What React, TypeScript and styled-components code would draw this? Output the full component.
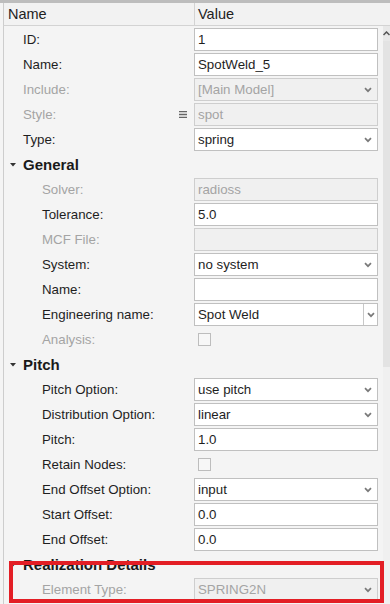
import styled, { createGlobalStyle } from 'styled-components';

type Control =
  | { type: 'input'; value: string; disabled?: boolean }
  | { type: 'select'; value: string; disabled?: boolean }
  | { type: 'combo'; value: string }
  | { type: 'check'; disabled?: boolean };

type Item =
  | { kind: 'section'; title: string }
  | { kind: 'field'; label: string; depth: 0 | 1; disabled?: boolean; menu?: boolean; control: Control };

const items: Item[] = [
  { kind: 'field', label: 'ID:', depth: 0, control: { type: 'input', value: '1' } },
  { kind: 'field', label: 'Name:', depth: 0, control: { type: 'input', value: 'SpotWeld_5' } },
  { kind: 'field', label: 'Include:', depth: 0, disabled: true, control: { type: 'select', value: '[Main Model]', disabled: true } },
  { kind: 'field', label: 'Style:', depth: 0, disabled: true, menu: true, control: { type: 'input', value: 'spot', disabled: true } },
  { kind: 'field', label: 'Type:', depth: 0, control: { type: 'select', value: 'spring' } },
  { kind: 'section', title: 'General' },
  { kind: 'field', label: 'Solver:', depth: 1, disabled: true, control: { type: 'input', value: 'radioss', disabled: true } },
  { kind: 'field', label: 'Tolerance:', depth: 1, control: { type: 'input', value: '5.0' } },
  { kind: 'field', label: 'MCF File:', depth: 1, disabled: true, control: { type: 'input', value: '', disabled: true } },
  { kind: 'field', label: 'System:', depth: 1, control: { type: 'select', value: 'no system' } },
  { kind: 'field', label: 'Name:', depth: 1, control: { type: 'input', value: '' } },
  { kind: 'field', label: 'Engineering name:', depth: 1, control: { type: 'combo', value: 'Spot Weld' } },
  { kind: 'field', label: 'Analysis:', depth: 1, disabled: true, control: { type: 'check', disabled: true } },
  { kind: 'section', title: 'Pitch' },
  { kind: 'field', label: 'Pitch Option:', depth: 1, control: { type: 'select', value: 'use pitch' } },
  { kind: 'field', label: 'Distribution Option:', depth: 1, control: { type: 'select', value: 'linear' } },
  { kind: 'field', label: 'Pitch:', depth: 1, control: { type: 'input', value: '1.0' } },
  { kind: 'field', label: 'Retain Nodes:', depth: 1, control: { type: 'check' } },
  { kind: 'field', label: 'End Offset Option:', depth: 1, control: { type: 'select', value: 'input' } },
  { kind: 'field', label: 'Start Offset:', depth: 1, control: { type: 'input', value: '0.0' } },
  { kind: 'field', label: 'End Offset:', depth: 1, control: { type: 'input', value: '0.0' } },
  { kind: 'section', title: 'Realization Details' },
  { kind: 'field', label: 'Element Type:', depth: 1, disabled: true, control: { type: 'select', value: 'SPRING2N', disabled: true } },
];

const Chevron = () => (
  <svg width="8" height="6" viewBox="0 0 8 6">
    <path d="M1 1.2 L4 4.2 L7 1.2" fill="none" stroke="#7a7a7a" strokeWidth="1.7" />
  </svg>
);

const renderControl = (c: Control) => {
  if (c.type === 'check') return <CheckBox />;
  if (c.type === 'combo')
    return (
      <Field>
        <FieldText>{c.value}</FieldText>
        <ComboButton>
          <Chevron />
        </ComboButton>
      </Field>
    );
  return (
    <Field $disabled={c.disabled}>
      <FieldText>{c.value}</FieldText>
      {c.type === 'select' && (
        <SelectArrow>
          <Chevron />
        </SelectArrow>
      )}
    </Field>
  );
};

const App = () => (
  <Page>
    <GlobalStyle />
    <TopBar />
    <Header>
      <HeadName>Name</HeadName>
      <HeadValue>Value</HeadValue>
    </Header>
    <Body>
      <List>
        {items.map((item, i) =>
          item.kind === 'section' ? (
            <SectionRow key={i}>
              <svg width="6" height="4" viewBox="0 0 6 4">
                <path d="M0 0 H6 L3 3.5 Z" fill="#333" />
              </svg>
              <SectionTitle>{item.title}</SectionTitle>
            </SectionRow>
          ) : (
            <Row key={i}>
              <Label $depth={item.depth} $disabled={item.disabled}>
                <span>{item.label}</span>
                {item.menu && (
                  <svg width="8" height="7" viewBox="0 0 8 7">
                    <path d="M0 0.5 H8 M0 3.5 H8 M0 6.5 H8" stroke="#666" strokeWidth="1.3" />
                  </svg>
                )}
              </Label>
              <ValueCell>{renderControl(item.control)}</ValueCell>
            </Row>
          )
        )}
      </List>
      <Scrollbar>
        <ScrollArrow>
          <svg width="7" height="5" viewBox="0 0 7 5">
            <path d="M0.5 4 L3.5 1 L6.5 4" fill="none" stroke="#555" strokeWidth="1.5" />
          </svg>
        </ScrollArrow>
        <Thumb />
      </Scrollbar>
    </Body>
    <Highlight />
  </Page>
);

export default App;

const GlobalStyle = createGlobalStyle`
  html, body { margin: 0; padding: 0; background: #f4f4f4; }
  body { font-family: "Liberation Sans", Arial, sans-serif; }
`;

const Page = styled.div`
  position: relative;
  width: 390px;
  height: 604px;
  overflow: hidden;
  background: #f4f4f4;
  color: #1e1e1e;
`;

const TopBar = styled.div`
  height: 3px;
  background: #bdbdbd;
`;

const Header = styled.div`
  display: grid;
  grid-template-columns: 190px 1fr;
  height: 22px;
  margin-left: 3px;
  border-left: 1px solid #cdcdcd;
  border-bottom: 1px solid #d3d3d3;
  background: #f2f2f2;
  font-size: 14.5px;
  color: #222;
`;

const HeadName = styled.div`
  display: flex;
  align-items: center;
  padding-left: 4px;
`;

const HeadValue = styled.div`
  display: flex;
  align-items: center;
  padding-left: 3px;
  border-left: 1px solid #d3d3d3;
`;

const Body = styled.div`
  display: flex;
  height: 578px;
`;

const List = styled.div`
  width: 379px;
  margin-left: 3px;
  border-left: 1px solid #cdcdcd;
  padding-top: 1px;
`;

const Row = styled.div`
  display: grid;
  grid-template-columns: 190px 184px;
  height: 25px;
  align-items: center;
`;

const Label = styled.div<{ $depth: 0 | 1; $disabled?: boolean }>`
  display: flex;
  align-items: center;
  justify-content: space-between;
  padding-left: ${({ $depth }) => ($depth ? 38 : 19)}px;
  padding-right: 7px;
  font-size: 13.3px;
  color: ${({ $disabled }) => ($disabled ? '#a4a4a4' : '#1e1e1e')};
`;

const ValueCell = styled.div`
  display: flex;
  align-items: center;
  height: 25px;
`;

const Field = styled.div<{ $disabled?: boolean }>`
  box-sizing: border-box;
  display: flex;
  align-items: center;
  width: 184px;
  height: 23px;
  padding-left: 3px;
  border: 1px solid ${({ $disabled }) => ($disabled ? '#cecece' : '#c0c0c0')};
  background: ${({ $disabled }) => ($disabled ? '#f0f0f0' : '#ffffff')};
  color: ${({ $disabled }) => ($disabled ? '#a4a4a4' : '#1e1e1e')};
  font-size: 13.3px;
`;

const FieldText = styled.span`
  flex: 1;
  white-space: nowrap;
`;

const SelectArrow = styled.span`
  display: flex;
  padding-right: 5px;
`;

const ComboButton = styled.span`
  display: flex;
  align-items: center;
  justify-content: center;
  width: 13px;
  height: 100%;
  border-left: 1px solid #c8c8c8;
`;

const CheckBox = styled.span`
  box-sizing: border-box;
  width: 13px;
  height: 13px;
  margin-left: 4px;
  border: 1px solid #bdbdbd;
  background: #f7f7f7;
`;

const SectionRow = styled.div`
  display: flex;
  align-items: center;
  gap: 7px;
  height: 25px;
  padding-left: 6px;
`;

const SectionTitle = styled.span`
  font-size: 15px;
  font-weight: 700;
  color: #1a1a1a;
`;

const Scrollbar = styled.div`
  display: flex;
  flex-direction: column;
  width: 7px;
  background: #f0f0f0;
`;

const ScrollArrow = styled.div`
  display: flex;
  justify-content: flex-end;
  padding-top: 5px;
  height: 10px;
  background: #e8e8e8;
`;

const Thumb = styled.div`
  height: 326px;
  background: #e3e3e3;
`;

const Highlight = styled.div`
  position: absolute;
  left: 9px;
  top: 561px;
  width: 375px;
  height: 42px;
  box-sizing: border-box;
  border: 4px solid #e31e25;
`;
